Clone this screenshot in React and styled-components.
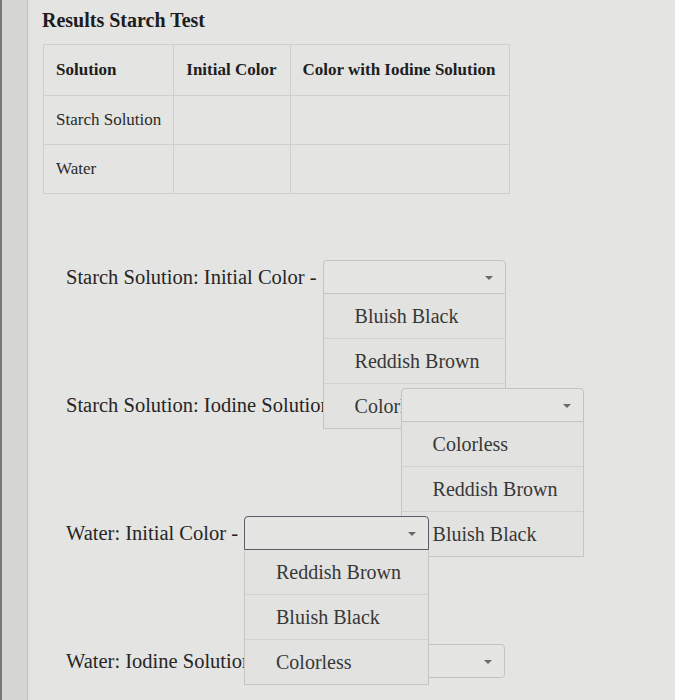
import React from "react";
import styled, { createGlobalStyle } from "styled-components";

const GlobalStyle = createGlobalStyle`
  html, body {
    margin: 0;
    padding: 0;
    background: #e4e4e2;
    font-family: "Liberation Serif", "Times New Roman", serif;
    color: #222;
  }
`;

const Page = styled.div`
  display: flex;
  min-height: 700px;
  overflow: hidden;
`;

const Gutter = styled.div`
  width: 25px;
  flex: none;
  background: #d5d5d3;
  border-left: 2px solid #767676;
  border-right: 1px solid #c2c2c0;
`;

const Main = styled.main`
  flex: 1;
  padding: 7px 0 0 14px;
`;

const Title = styled.h2`
  margin: 0;
  font-size: 20px;
  line-height: 26px;
  font-weight: bold;
  color: #1c1c1c;
`;

const Table = styled.table`
  margin: 11px 0 0 1px;
  border-collapse: collapse;
  table-layout: fixed;
  width: 467px;
  font-size: 17px;
  border: 1px solid #cfcfcd;
`;

const Th = styled.th`
  width: ${(p) => p.$w}px;
  height: 50px;
  padding: 0 12px;
  text-align: left;
  font-weight: bold;
  color: #1e1e1e;
  border: 1px solid #cfcfcd;
  white-space: nowrap;
`;

const Td = styled.td`
  height: 48px;
  padding: 0 12px;
  color: #2b2b2b;
  border: 1px solid #cfcfcd;
  white-space: nowrap;
`;

const Form = styled.div`
  margin: 66px 0 0 24px;
  display: flex;
  flex-direction: column;
  gap: 94px;
`;

const Row = styled.div`
  display: flex;
  align-items: center;
  height: 34px;
  gap: 6px;
`;

const Label = styled.span`
  font-size: 20.5px;
  color: #262626;
  white-space: nowrap;
`;

const SelectWrap = styled.div`
  position: relative;
  z-index: ${(p) => p.$z || "auto"};
  width: ${(p) => p.$w || 183}px;
  flex: none;
`;

const Select = styled.div`
  position: relative;
  height: 34px;
  box-sizing: border-box;
  border: 1px solid ${(p) => (p.$focused ? "#585d68" : "#c3c3c1")};
  border-radius: ${(p) => (p.$open ? "4px 4px 0 0" : "4px")};
  background: #e5e5e3;
`;

const Caret = styled.span`
  position: absolute;
  right: 12px;
  top: 15px;
  width: 0;
  height: 0;
  border-left: 4px solid transparent;
  border-right: 4px solid transparent;
  border-top: 4px solid #6a6a6a;
`;

const Menu = styled.ul`
  position: absolute;
  top: 100%;
  left: 0;
  width: 100%;
  box-sizing: border-box;
  margin: 0;
  padding: 0;
  list-style: none;
  background: #e2e2e0;
  border: 1px solid #c6c6c4;
  border-top: none;
`;

const Option = styled.li`
  height: 44px;
  display: flex;
  align-items: center;
  padding-left: 31px;
  font-size: 20px;
  color: #373737;
  white-space: nowrap;
  border-top: 1px solid #d1d1cf;
  &:first-child {
    border-top: none;
  }
`;

const fields = [
  {
    label: "Starch Solution: Initial Color -",
    options: ["Bluish Black", "Reddish Brown", "Colorless"],
  },
  {
    label: "Starch Solution: Iodine Solution Color -",
    options: ["Colorless", "Reddish Brown", "Bluish Black"],
  },
  {
    label: "Water: Initial Color -",
    options: ["Reddish Brown", "Bluish Black", "Colorless"],
    focused: true,
    w: 185,
    z: 2,
  },
  {
    label: "Water: Iodine Solution Color -",
    options: null,
  },
];

export default function App() {
  return (
    <>
      <GlobalStyle />
      <Page>
        <Gutter />
        <Main>
          <Title>Results Starch Test</Title>
          <Table>
            <thead>
              <tr>
                <Th $w={105}>Solution</Th>
                <Th $w={91}>Initial Color</Th>
                <Th $w={194}>Color with Iodine Solution</Th>
              </tr>
            </thead>
            <tbody>
              <tr>
                <Td>Starch Solution</Td>
                <Td />
                <Td />
              </tr>
              <tr>
                <Td>Water</Td>
                <Td />
                <Td />
              </tr>
            </tbody>
          </Table>
          <Form>
            {fields.map((f) => (
              <Row key={f.label}>
                <Label>{f.label}</Label>
                <SelectWrap $w={f.w} $z={f.z}>
                  <Select $focused={f.focused} $open={!!f.options}>
                    <Caret />
                  </Select>
                  {f.options && (
                    <Menu>
                      {f.options.map((o) => (
                        <Option key={o}>{o}</Option>
                      ))}
                    </Menu>
                  )}
                </SelectWrap>
              </Row>
            ))}
          </Form>
        </Main>
      </Page>
    </>
  );
}
